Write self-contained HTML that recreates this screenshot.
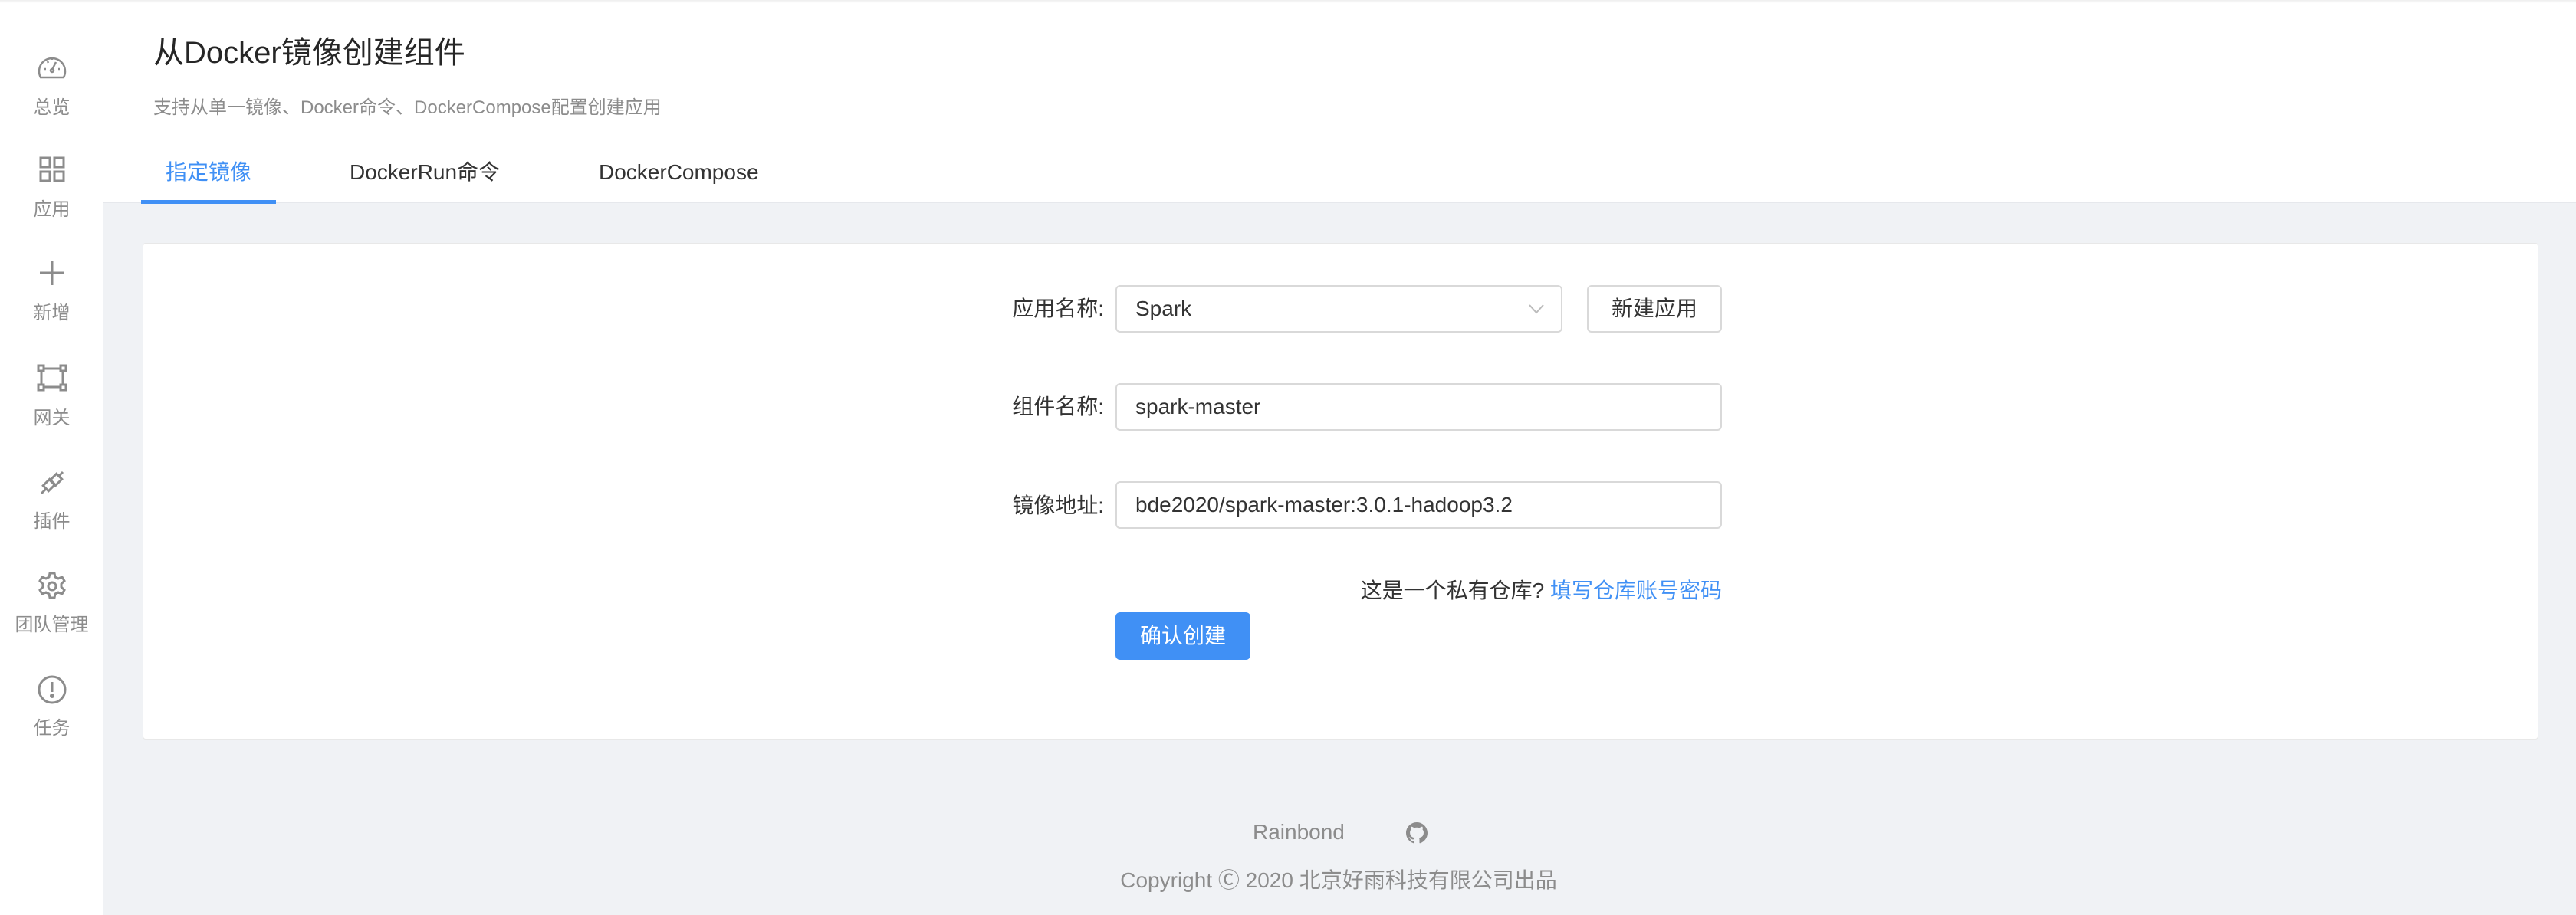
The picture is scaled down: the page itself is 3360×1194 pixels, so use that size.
<!DOCTYPE html>
<html><head><meta charset="utf-8"><style>
*{margin:0;padding:0;box-sizing:border-box}
body{width:3360px;height:1194px;position:relative;background:#f0f2f5;font-family:"Liberation Sans","Noto Sans CJK SC",sans-serif;overflow:hidden}
.abs{position:absolute;white-space:nowrap}
.side{position:absolute;left:0;top:0;width:135px;height:1194px;background:#fff}
.head{position:absolute;left:135px;top:0;right:0;height:265px;background:#fff;border-bottom:2px solid #e6e8ec}
.nav{position:absolute;left:0;width:135px;text-align:center;color:#8c8c8c;font-size:24px}
.nav svg{display:block;margin:0 auto}
.card{position:absolute;left:186px;top:317px;width:3125px;height:648px;background:#fff;border:1px solid #e8e8e8;border-radius:4px}
.lbl{position:absolute;color:#333;font-size:28px;text-align:right;width:300px;left:1140px;line-height:40px}
.inp{position:absolute;left:1455px;height:62px;border:2px solid #d9d9d9;border-radius:6px;background:#fff;font-size:28px;color:#333;padding-left:24px;line-height:58px}
.tab{position:absolute;top:205px;font-size:28px;line-height:40px;white-space:nowrap}
</style></head><body>
<div class="side"></div>
<div class="head"></div>
<div class="abs" style="left:0;top:0;width:3360px;height:4px;background:linear-gradient(#eee,#fff)"></div>

<div class="nav" style="top:68px"><svg width="40" height="40" viewBox="0 0 40 40" fill="none" stroke="#8c8c8c" stroke-width="2.5"><path d="M5 33 A17 17 0 1 1 35 33 Z"/><path d="M20 23 L25 13"/><circle cx="20" cy="24" r="2"/><path d="M10 22h2M28 22h2M14 12l1 2M20 8v2"/></svg><div style="margin-top:12px">总览</div></div>
<div class="nav" style="top:203px"><svg width="36" height="36" viewBox="0 0 36 36" fill="none" stroke="#8c8c8c" stroke-width="3"><rect x="3" y="3" width="12" height="12"/><rect x="21" y="3" width="12" height="12"/><rect x="3" y="21" width="12" height="12"/><rect x="21" y="21" width="12" height="12"/></svg><div style="margin-top:14px">应用</div></div>
<div class="nav" style="top:338px"><svg width="36" height="36" viewBox="0 0 36 36" stroke="#8c8c8c" stroke-width="3"><path d="M18 2v32M2 18h32"/></svg><div style="margin-top:14px">新增</div></div>
<div class="nav" style="top:475px"><svg width="40" height="36" viewBox="0 0 40 36" fill="none" stroke="#8c8c8c" stroke-width="3"><rect x="6" y="6" width="28" height="24"/><rect x="2" y="2" width="7" height="7" fill="#fff"/><rect x="31" y="2" width="7" height="7" fill="#fff"/><rect x="2" y="27" width="7" height="7" fill="#fff"/><rect x="31" y="27" width="7" height="7" fill="#fff"/></svg><div style="margin-top:14px">网关</div></div>
<div class="nav" style="top:610px"><svg width="40" height="40" viewBox="0 0 40 40" fill="none" stroke="#8c8c8c" stroke-width="3"><path d="M6 34l6-6M34 6l-6 6"/><rect x="10" y="18" width="12" height="10" transform="rotate(-45 16 23)"/><rect x="19" y="11" width="12" height="10" transform="rotate(-45 25 16)"/></svg><div style="margin-top:10px">插件</div></div>
<div class="nav" style="top:745px"><svg width="40" height="40" viewBox="0 0 40 40" fill="none" stroke="#8c8c8c" stroke-width="3"><path d="M17 3h6l1 5 4 2 5-2 3 5-4 4v4l4 4-3 5-5-2-4 2-1 5h-6l-1-5-4-2-5 2-3-5 4-4v-4l-4-4 3-5 5 2 4-2z"/><circle cx="20" cy="20" r="5"/></svg><div style="margin-top:10px">团队管理</div></div>
<div class="nav" style="top:880px"><svg width="40" height="40" viewBox="0 0 40 40" fill="none" stroke="#8c8c8c" stroke-width="3"><circle cx="20" cy="20" r="17"/><path d="M20 10v13"/><circle cx="20" cy="28" r="1.5" fill="#8c8c8c"/></svg><div style="margin-top:10px">任务</div></div>

<div class="abs" style="left:200px;top:36px;font-size:40px;color:#262626">从Docker镜像创建组件</div>
<div class="abs" style="left:200px;top:120px;font-size:24px;color:#8c8c8c">支持从单一镜像、Docker命令、DockerCompose配置创建应用</div>
<div class="tab" style="left:216px;color:#4090f5">指定镜像</div>
<div class="tab" style="left:456px;color:#333">DockerRun命令</div>
<div class="tab" style="left:781px;color:#333">DockerCompose</div>
<div class="abs" style="left:184px;top:261px;width:176px;height:5px;background:#4090f5"></div>

<div class="card"></div>
<div class="lbl" style="top:383px">应用名称:</div>
<div class="inp" style="top:372px;width:583px">Spark<svg style="position:absolute;right:22px;top:22px" width="20" height="14" viewBox="0 0 20 14" fill="none" stroke="#bbb" stroke-width="2"><path d="M1 2l9 10 9-10"/></svg></div>
<div class="inp" style="top:372px;left:2070px;width:176px;padding:0;text-align:center;color:#333">新建应用</div>
<div class="lbl" style="top:511px">组件名称:</div>
<div class="inp" style="top:500px;width:791px">spark-master</div>
<div class="lbl" style="top:640px">镜像地址:</div>
<div class="inp" style="top:628px;width:791px">bde2020/spark-master:3.0.1-hadoop3.2</div>
<div class="abs" style="right:1114px;top:749px;font-size:28px;color:#333">这是一个私有仓库? <span style="color:#4090f5">填写仓库账号密码</span></div>
<div class="abs" style="left:1455px;top:799px;width:176px;height:62px;background:#4090f5;border-radius:6px;color:#fff;font-size:28px;text-align:center;line-height:62px">确认创建</div>

<div class="abs" style="left:1634px;top:1070px;font-size:28px;color:#8c8c8c">Rainbond</div>
<svg class="abs" style="left:1834px;top:1073px" width="28" height="28" viewBox="0 0 16 16"><path fill="#8c8c8c" d="M8 0C3.58 0 0 3.58 0 8c0 3.540 2.29 6.53 5.47 7.59.4.07.55-.17.55-.38 0-.19-.01-.82-.01-1.49-2.01.37-2.53-.49-2.69-.94-.09-.23-.48-.94-.82-1.13-.28-.15-.68-.52-.01-.53.63-.01 1.08.58 1.23.82.72 1.21 1.87.87 2.33.66.07-.52.28-.87.51-1.07-1.78-.2-3.64-.89-3.64-3.95 0-.87.31-1.59.82-2.15-.08-.2-.36-1.02.08-2.12 0 0 .67-.21 2.2.82.64-.18 1.32-.27 2-.27.68 0 1.36.09 2 .27 1.53-1.04 2.2-.82 2.2-.82.44 1.1.16 1.92.08 2.12.51.56.82 1.27.82 2.15 0 3.07-1.87 3.75-3.65 3.95.29.25.54.73.54 1.48 0 1.07-.01 1.93-.01 2.2 0 .21.15.46.55.38A8.013 8.013 0 0016 8c0-4.42-3.58-8-8-8z"/></svg>
<div class="abs" style="left:1455px;top:1127px;width:582px;text-align:center;font-size:28px;color:#8c8c8c">Copyright Ⓒ 2020 北京好雨科技有限公司出品</div>
</body></html>
